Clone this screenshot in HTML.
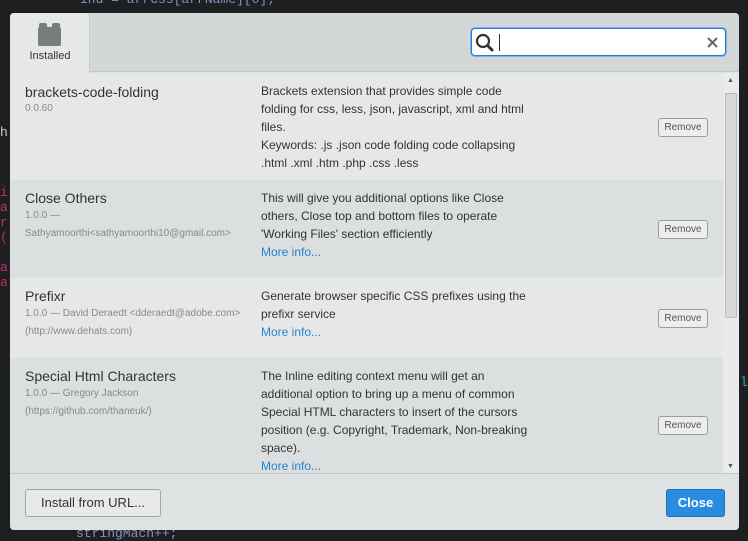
<!DOCTYPE html>
<html><head><style>
*{margin:0;padding:0;box-sizing:border-box}
body{width:748px;height:541px;background:#1d1f21;overflow:hidden;position:relative;font-family:"Liberation Sans",sans-serif}
.code{position:absolute;font-family:"Liberation Mono",monospace;font-size:13px;color:#8a8fc0;white-space:pre}
.dlg{position:absolute;left:10px;top:13px;width:729px;height:517px;background:#dfe2e2;border-radius:4px;overflow:hidden}
.hdr{position:absolute;left:0;top:0;width:729px;height:59px;background:#d4d7d7;border-bottom:1px solid #c2c5c5}
.tab{position:absolute;left:0;top:0;width:80px;height:60px;background:#e6e8e8;border-right:1px solid #c6c9c9;border-radius:4px 0 0 0}
.tab .ic{position:absolute;left:28px;top:14px;width:23px;height:19px;background:#7a7d7d;border-radius:2px}
.tab .ic:before,.tab .ic:after{content:"";position:absolute;top:-4px;width:8px;height:5px;background:#7a7d7d;border-radius:2px 2px 0 0}
.tab .ic:before{left:1px}.tab .ic:after{right:1px}
.tab span{position:absolute;left:0;width:80px;top:37px;text-align:center;font-size:11px;color:#333}
.search{position:absolute;left:461px;top:15px;width:255px;height:28px;background:#fff;border:1px solid #2a7ad1;border-radius:4px;box-shadow:0 0 0 1px #7ab1ec}
.row{position:absolute;left:0;width:713px}
.nm{position:absolute;left:15px;font-size:14px;color:#333}
.meta{position:absolute;left:15px;font-size:10px;color:#888;line-height:18px;white-space:nowrap}
.desc{position:absolute;left:251px;font-size:12px;color:#333;line-height:18px;white-space:nowrap}
.desc a{color:#2a80d0}
.rm{position:absolute;left:648px;width:50px;height:19px;border:1px solid #9a9d9d;border-radius:3px;background:#eceeee;font-size:10px;color:#555;text-align:center;line-height:17px}
.sb{position:absolute;left:713px;top:60px;width:16px;height:400px;background:#e9ebeb}
.thumb{position:absolute;left:715px;top:80px;width:12px;height:225px;background:#d7d9d9;border:1px solid #b9bcbc;border-radius:2px}
.ftr{position:absolute;left:0;top:460px;width:729px;height:57px;border-top:1px solid #c5c8c8;background:#dfe2e2}
.btn{position:absolute;top:15px;height:28px;border-radius:3px;font-size:13px;line-height:26px;text-align:center}
</style></head><body>
<div class="code" style="left:80px;top:-8px">ind = arrCss[arrName][0];</div>
<div class="code" style="left:0;top:125px;color:#ccc">h</div>
<div class="code" style="left:0;top:185px;color:#c0306a">i<br>a<br>r<br>(<br><br>a<br>a</div>
<div class="code" style="left:76px;top:526px">stringMach++;</div>
<div class="code" style="left:740px;top:375px;color:#3aa">l</div>
<div class="dlg">
 <div class="hdr">
  <div class="tab"><div class="ic"></div><span>Installed</span></div>
  <div class="search">
   <svg style="position:absolute;left:3px;top:4px" width="20" height="20" viewBox="0 0 20 20"><circle cx="8" cy="8" r="6" fill="none" stroke="#333" stroke-width="2.2"/><path d="M12.5 12.5 L17 17" stroke="#333" stroke-width="3" stroke-linecap="round"/></svg>
   <div style="position:absolute;left:27px;top:5px;width:1px;height:17px;background:#333"></div>
   <svg style="position:absolute;left:235px;top:8px" width="11" height="11" viewBox="0 0 11 11"><path d="M1 1L10 10M10 1L1 10" stroke="#666" stroke-width="2"/></svg>
  </div>
 </div>
 <div class="row" style="top:60px;height:107px;background:#e6e8e8">
  <div class="nm" style="top:11px">brackets-code-folding</div>
  <div class="meta" style="top:27px">0.0.60</div>
  <div class="desc" style="top:9px">Brackets extension that provides simple code<br>folding for css, less, json, javascript, xml and html<br>files.<br>Keywords: .js .json code folding code collapsing<br>.html .xml .htm .php .css .less</div>
  <div class="rm" style="top:45px">Remove</div>
 </div>
 <div class="row" style="top:167px;height:98px;background:#dcdfdf">
  <div class="nm" style="top:10px">Close Others</div>
  <div class="meta" style="top:27px">1.0.0 —<br>Sathyamoorthi&lt;sathyamoorthi10@gmail.com&gt;</div>
  <div class="desc" style="top:9px">This will give you additional options like Close<br>others, Close top and bottom files to operate<br>'Working Files' section efficiently<br><a>More info...</a></div>
  <div class="rm" style="top:40px">Remove</div>
 </div>
 <div class="row" style="top:265px;height:80px;background:#e6e8e8">
  <div class="nm" style="top:10px">Prefixr</div>
  <div class="meta" style="top:27px">1.0.0 — David Deraedt &lt;dderaedt@adobe.com&gt;<br>(http://www.dehats.com)</div>
  <div class="desc" style="top:9px">Generate browser specific CSS prefixes using the<br>prefixr service<br><a>More info...</a></div>
  <div class="rm" style="top:31px">Remove</div>
 </div>
 <div class="row" style="top:345px;height:115px;background:#dcdfdf">
  <div class="nm" style="top:10px">Special Html Characters</div>
  <div class="meta" style="top:27px">1.0.0 — Gregory Jackson<br>(https://github.com/thaneuk/)</div>
  <div class="desc" style="top:9px">The Inline editing context menu will get an<br>additional option to bring up a menu of common<br>Special HTML characters to insert of the cursors<br>position (e.g. Copyright, Trademark, Non-breaking<br>space).<br><a>More info...</a></div>
  <div class="rm" style="top:58px">Remove</div>
 </div>
 <div class="sb"></div>
 <div class="thumb"></div>
 <div style="position:absolute;left:717px;top:64px;font-size:7px;color:#555">▲</div>
 <div style="position:absolute;left:717px;top:450px;font-size:7px;color:#555">▼</div>
 <div class="ftr">
  <div class="btn" style="left:15px;width:136px;background:#e8eaea;border:1px solid #a4a7a7;color:#333">Install from URL...</div>
  <div class="btn" style="left:656px;width:59px;background:#2a8ce0;border:1px solid #1f6fb8;color:#fff;font-weight:bold">Close</div>
 </div>
</div>
</body></html>
